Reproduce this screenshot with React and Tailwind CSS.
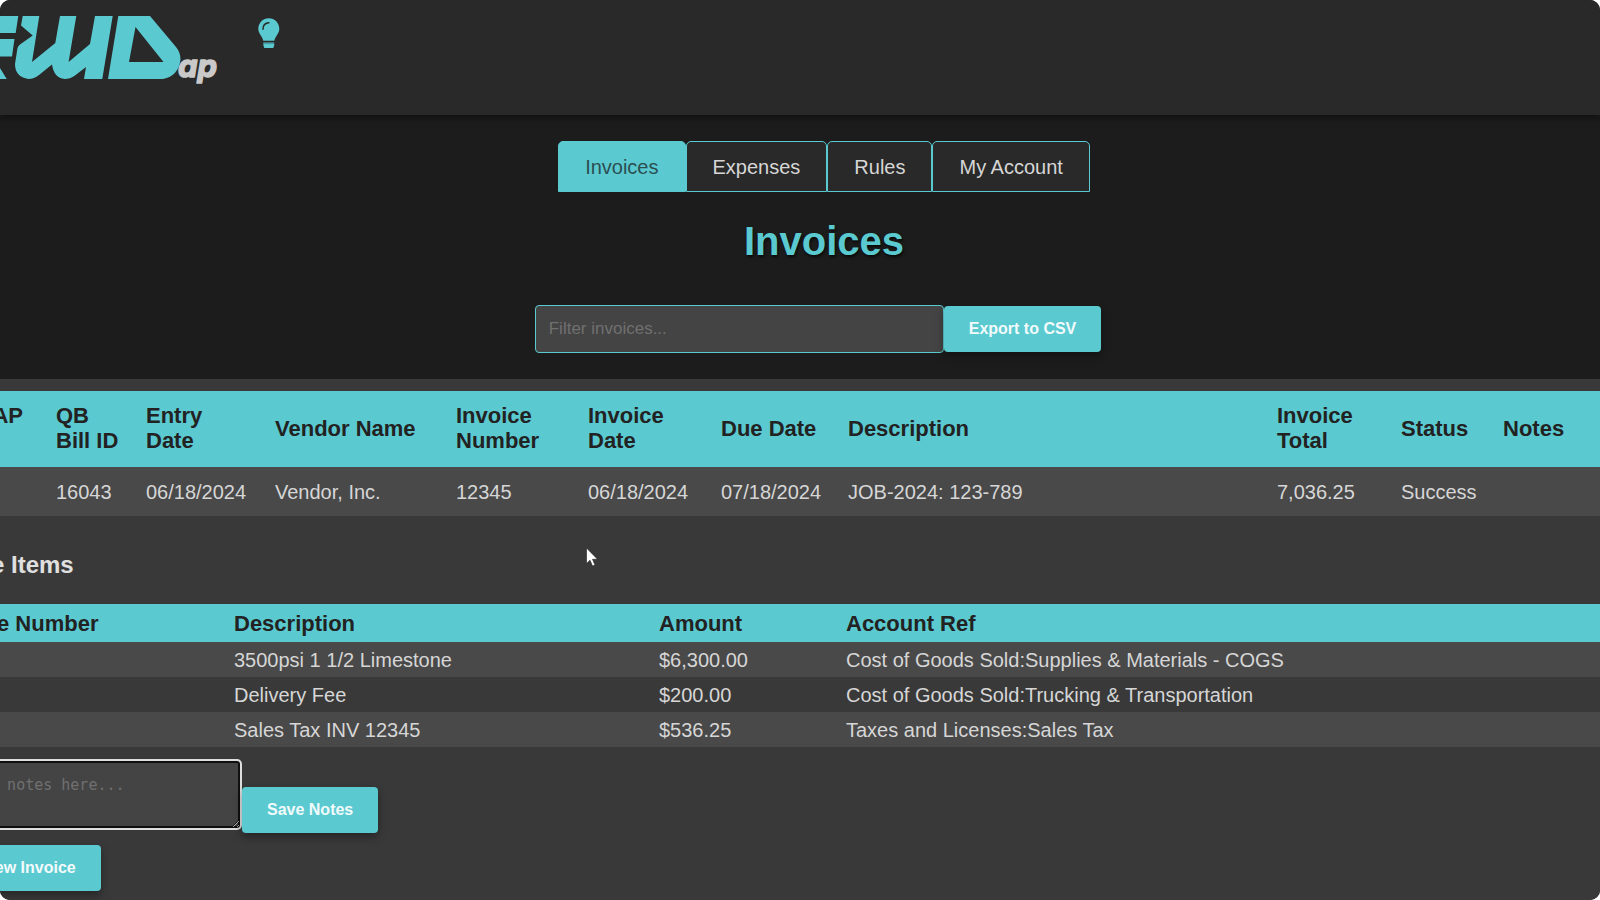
import React from "react";

const tabs = ["Invoices", "Expenses", "Rules", "My Account"];

const invoiceColumns = [
  { lines: ["FWD AP", "\u00a0"], width: "w-[119px]", value: "" },
  { lines: ["QB", "Bill ID"], width: "w-[90px]", value: "16043" },
  { lines: ["Entry", "Date"], width: "w-[129px]", value: "06/18/2024" },
  { lines: ["Vendor Name"], width: "w-[181px]", value: "Vendor, Inc." },
  { lines: ["Invoice", "Number"], width: "w-[132px]", value: "12345" },
  { lines: ["Invoice", "Date"], width: "w-[133px]", value: "06/18/2024" },
  { lines: ["Due Date"], width: "w-[127px]", value: "07/18/2024" },
  { lines: ["Description"], width: "w-[429px]", value: "JOB-2024: 123-789" },
  { lines: ["Invoice", "Total"], width: "w-[124px]", value: "7,036.25" },
  { lines: ["Status"], width: "w-[102px]", value: "Success" },
  { lines: ["Notes"], width: "", value: "" },
];

const itemColumns = [
  { label: "Line Number", width: "w-[270px]" },
  { label: "Description", width: "w-[425px]" },
  { label: "Amount", width: "w-[187px]" },
  { label: "Account Ref", width: "" },
];

const items = [
  ["", "3500psi 1 1/2 Limestone", "$6,300.00", "Cost of Goods Sold:Supplies & Materials - COGS"],
  ["", "Delivery Fee", "$200.00", "Cost of Goods Sold:Trucking & Transportation"],
  ["", "Sales Tax INV 12345", "$536.25", "Taxes and Licenses:Sales Tax"],
];

function Logo() {
  return (
    <svg viewBox="-60 0 280 115" className="h-[115px] w-[280px] shrink-0" role="img" aria-label="FWD ap">
      <g fill="#5bc9d0">
        <path d="M-40 16H18.3L15.7 33H-43ZM-44 39H14.5L12 56.5H-46ZM-12 56.500L0 68L6.700 79H-50Z" />
        <path d="M22.7 16H39.3L32 62L55.3 43L60 16H76.3L68.6 62L90 44L95 16H112.7L102.3 79H84L86 67L75 75.500Q70 79 64.500 79Q54 78 52 64.500L39 75Q34 79 28.500 79Q15 77 15 64L17.500 48Q18 46 20 44.500L32.700 35.500L21 25.500Z" />
        <path fillRule="evenodd" d="M118.300 16H150L176 47Q180.500 52.500 180.500 59.500Q178.500 76 163 79H108ZM135.500 27L129 62H163.500Z" />
      </g>
      <text
        x="178"
        y="77"
        fill="#c9c9c9"
        stroke="#c9c9c9"
        strokeWidth="1.5"
        strokeLinejoin="round"
        fontSize="31"
        className="font-['Inter',sans-serif] font-bold italic [font-feature-settings:'cv11']"
      >
        ap
      </text>
    </svg>
  );
}

function Bulb() {
  return (
    <svg viewBox="0 0 22 30" className="mt-[18px] h-[30px] w-[22px]" aria-hidden="true">
      <path
        d="M10.800 .300C16.700 .300 21.300 5 21.300 10.800C21.300 15.500 17.500 18 16.300 22.700H5.300C4.100 18 .300 15.500 .300 10.800C.300 5 4.900 .300 10.800 .300Z"
        fill="#5bc9d0"
      />
      <path d="M5 11.300C4.700 7.500 7.200 4.800 10.900 4.800" fill="none" stroke="#292929" strokeWidth="1.500" strokeLinecap="round" />
      <path d="M5.400 24.400H16.200V27.300L15.300 30H6.300L5.400 27.300Z" fill="#5bc9d0" />
      <path d="M5.400 25.600H16.200" stroke="#3d8c91" strokeWidth=".8" />
    </svg>
  );
}

function ActionButton({ children, className = "" }) {
  return (
    <button
      type="button"
      className={`h-[46px] rounded-[4px] bg-[#5bc9d0] px-[25px] text-[16px] font-bold whitespace-nowrap text-[#f2fbfb] shadow-[0_4px_8px_rgba(0,0,0,0.35)] ${className}`}
    >
      {children}
    </button>
  );
}

export default function App() {
  return (
    <div className="relative flex min-h-screen flex-col overflow-hidden rounded-[10px] bg-[#1c1c1c] font-['Liberation_Sans',Arial,sans-serif] text-[20px] text-[#d6d6d6]">
      <header className="flex h-[115px] items-start bg-[#292929] shadow-[0_2px_8px_rgba(0,0,0,0.5)]">
        <div className="-ml-[60px] flex">
          <Logo />
        </div>
        <button type="button" aria-label="Tips" className="ml-[38px]">
          <Bulb />
        </button>
      </header>

      <main className="-mr-[123px] -ml-[75px] flex grow flex-col">
        <nav className="mt-[26px] flex justify-center">
          {tabs.map((tab, index) => (
            <a
              key={tab}
              href="#"
              aria-current={index === 0 ? "page" : undefined}
              className={`flex h-[51px] items-center rounded-t-[5px] border border-[#5bc9d0] px-[26px] ${
                index === 0 ? "bg-[#5bc9d0] text-[#2b4f52]" : "bg-[#292929] text-[#d6d6d6]"
              }`}
            >
              {tab}
            </a>
          ))}
        </nav>

        <h1 className="mt-[26px] text-center text-[40px] leading-[46px] font-bold text-[#5bc9d0] [text-shadow:1px_2px_3px_rgba(0,0,0,0.7)]">
          Invoices
        </h1>

        <div className="mt-[41px] flex items-center justify-center pr-3">
          <input
            type="text"
            aria-label="Filter invoices"
            placeholder="Filter invoices..."
            className="h-[48px] w-[409px] rounded-[4px] border border-[#5bc9d0] bg-[#444444] px-[13px] text-[17px] outline-none placeholder:text-[#707070]"
          />
          <ActionButton>Export to CSV</ActionButton>
        </div>

        <section className="mt-[26px] grow bg-[#393939] pt-3 pb-[9px]">
          <table className="w-full table-fixed border-collapse text-left whitespace-nowrap">
            <thead className="bg-[#5bc9d0] text-[22px] leading-[25px] text-[#222222]">
              <tr>
                {invoiceColumns.map((column) => (
                  <th key={column.lines.join(" ")} scope="col" className={`pt-3 pr-0 pb-[14px] pl-3 ${column.width}`}>
                    {column.lines.map((line) => (
                      <span key={line} className="block">
                        {line}
                      </span>
                    ))}
                  </th>
                ))}
              </tr>
            </thead>
            <tbody>
              <tr className="h-[49px] bg-[#494949]">
                {invoiceColumns.map((column) => (
                  <td key={column.lines.join(" ")} className="pl-3">
                    {column.value}
                  </td>
                ))}
              </tr>
            </tbody>
          </table>

          <div className="px-[30px]">
            <h2 className="pt-[34px] pb-[24px] text-[24px] leading-[30px] font-bold text-[#e0e0e0]">Line Items</h2>
            <table className="w-full table-fixed border-collapse text-left whitespace-nowrap">
              <thead className="bg-[#5bc9d0] text-[22px] leading-[25px] text-[#222222]">
                <tr className="h-[38px]">
                  {itemColumns.map((column) => (
                    <th key={column.label} scope="col" className={`pl-[9px] ${column.width}`}>
                      {column.label}
                    </th>
                  ))}
                </tr>
              </thead>
              <tbody>
                {items.map((row) => (
                  <tr key={row[1]} className="h-[35px] odd:bg-[#494949]">
                    {row.map((cell, index) => (
                      <td key={index} className="pl-[9px]">
                        {cell}
                      </td>
                    ))}
                  </tr>
                ))}
              </tbody>
            </table>

            <div className="mt-3 flex items-end">
              <textarea
                aria-label="Notes"
                placeholder="Add notes here..."
                className="mb-[3px] h-[71px] w-[287px] resize rounded-[5px] border-2 border-[#dedede] bg-[#444444] px-[14px] py-[14px] font-['DejaVu_Sans_Mono',monospace] text-[15px] leading-[20px] shadow-[inset_0_0_0_2px_#101010] outline-none placeholder:text-[#707070]"
              />
              <ActionButton>Save Notes</ActionButton>
            </div>
            <ActionButton className="mt-3">View Invoice</ActionButton>
          </div>
        </section>
      </main>

      <svg
        viewBox="0 0 12 20"
        className="pointer-events-none absolute top-[547px] left-[586px] h-[20px] w-[12px]"
        aria-hidden="true"
      >
        <path d="M.5 1V16.500L4 13.200L6.500 19L9 18L6.500 12.300H11.500Z" fill="#ffffff" stroke="#222222" strokeWidth=".6" />
      </svg>
    </div>
  );
}
